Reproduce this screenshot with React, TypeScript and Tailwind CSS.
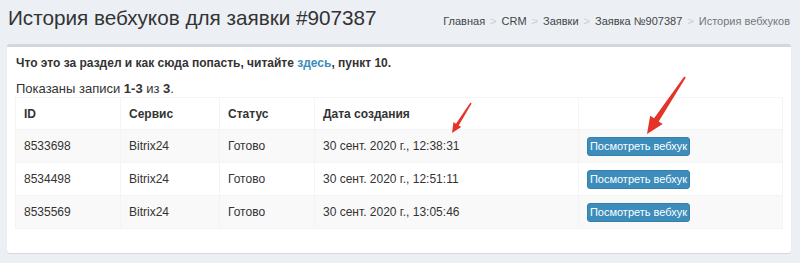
import React from "react";

type P = [number, number];
function arrowPoints(tail: P, tip: P, headLen: number, headW: number, w0: number, w1: number): string {
  const dx = tip[0] - tail[0];
  const dy = tip[1] - tail[1];
  const len = Math.hypot(dx, dy);
  const ux = dx / len, uy = dy / len;
  const nx = -uy, ny = ux;
  const bx = tip[0] - ux * headLen, by = tip[1] - uy * headLen;
  const pts: P[] = [
    [tail[0] + nx * w0 / 2, tail[1] + ny * w0 / 2],
    [bx + nx * w1 / 2, by + ny * w1 / 2],
    [bx + nx * headW / 2, by + ny * headW / 2],
    tip,
    [bx - nx * headW / 2, by - ny * headW / 2],
    [bx - nx * w1 / 2, by - ny * w1 / 2],
    [tail[0] - nx * w0 / 2, tail[1] - ny * w0 / 2],
  ];
  return pts.map((p) => `${p[0].toFixed(1)},${p[1].toFixed(1)}`).join(" ");
}

const rows = [
  { id: "8533698", time: "12:38:31" },
  { id: "8534498", time: "12:51:11" },
  { id: "8535569", time: "13:05:46" },
];

export default function App() {
  return (
    <div
      className="relative w-[800px] h-[263px] bg-[#ecf0f5] text-[#333] overflow-hidden"
      style={{ fontFamily: '"Liberation Sans", Arial, sans-serif' }}
    >
      <div className="flex items-center justify-between h-[44px] pl-[8px] pr-[10px] pb-[8px]">
        <h1 className="text-[20.7px] leading-[26px] font-normal text-[#333]">История вебхуков для заявки #907387</h1>
        <div className="flex items-center text-[11px] mt-[6px] text-[#444]">
          <span>Главная</span>
          <span className="px-[5px] text-[#ccc]">&gt;</span>
          <span>CRM</span>
          <span className="px-[5px] text-[#ccc]">&gt;</span>
          <span>Заявки</span>
          <span className="px-[5px] text-[#ccc]">&gt;</span>
          <span>Заявка №907387</span>
          <span className="px-[5px] text-[#ccc]">&gt;</span>
          <span className="text-[#777]">История вебхуков</span>
        </div>
      </div>

      <div className="mx-[7px] w-[784px] h-[209px] bg-white border-t-[3px] border-[#d2d6de] rounded-[3px] shadow-[0_1px_1px_rgba(0,0,0,0.1)] px-[8px] pt-[7px]">
        <div className="h-[18px] leading-[18px] text-[12px] font-bold pl-[1px]">
          Что это за раздел и как сюда попасть, читайте <span className="text-[#3c8dbc]">здесь</span>, пункт 10.
        </div>
        <div className="mt-[9px] h-[16px] leading-[16px] text-[13px] pl-[1px]">
          Показаны записи <b>1-3</b> из <b>3</b>.
        </div>
        <table className="w-[767px] border-collapse text-[12px] table-fixed">
          <colgroup>
            <col className="w-[105px]" />
            <col className="w-[99px]" />
            <col className="w-[95px]" />
            <col className="w-[264px]" />
            <col className="w-[204px]" />
          </colgroup>
          <thead>
            <tr className="h-[32px]">
              {["ID", "Сервис", "Статус", "Дата создания", ""].map((h, i) => (
                <th key={i} className="border border-[#f4f4f4] text-left font-bold px-[8px]">
                  {h}
                </th>
              ))}
            </tr>
          </thead>
          <tbody>
            {rows.map((r, i) => (
              <tr key={r.id} className={`h-[33px] ${i % 2 === 0 ? "bg-[#f9f9f9]" : "bg-white"}`}>
                <td className="border border-[#f4f4f4] px-[8px]">{r.id}</td>
                <td className="border border-[#f4f4f4] px-[8px]">Bitrix24</td>
                <td className="border border-[#f4f4f4] px-[8px]">Готово</td>
                <td className="border border-[#f4f4f4] px-[8px]">30 сент. 2020 г., {r.time}</td>
                <td className="border border-[#f4f4f4] px-[8px]">
                  <span className="inline-flex items-center justify-center w-[103px] h-[19px] rounded-[3px] bg-[#3c8dbc] border border-[#367fa9] text-white text-[11px]">
                    Посмотреть вебхук
                  </span>
                </td>
              </tr>
            ))}
          </tbody>
        </table>
      </div>

      <svg className="absolute left-0 top-0 pointer-events-none" width="800" height="263">
        <polygon points={arrowPoints([471, 103], [452, 133], 10, 9, 1.5, 3.2)} fill="#e4342a" />
        <polygon points={arrowPoints([685, 77], [647, 134], 17, 15, 2, 5.5)} fill="#e4342a" />
      </svg>
    </div>
  );
}
